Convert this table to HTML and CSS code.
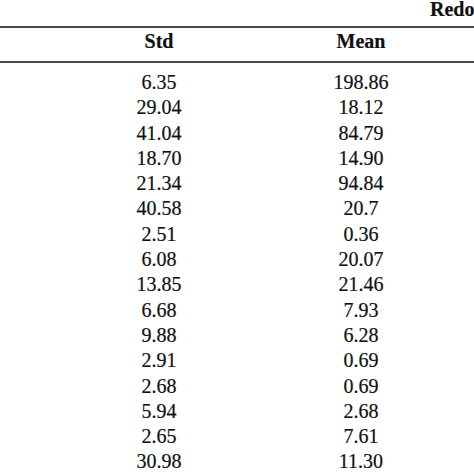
FILE: index.html
```html
<!DOCTYPE html>
<html>
<head>
<meta charset="utf-8">
<link rel="stylesheet" href="styles.css">
</head>
<body>
<div class="sheet">
  <div class="top"><span class="group">Redox Potential</span></div>
  <div class="head">
    <div></div><div class="cell">Std</div><div class="cell">Mean</div>
  </div>
  <div class="rows">
    <div class="row"><div></div><div class="cell">6.35</div><div class="cell">198.86</div></div>
    <div class="row"><div></div><div class="cell">29.04</div><div class="cell">18.12</div></div>
    <div class="row"><div></div><div class="cell">41.04</div><div class="cell">84.79</div></div>
    <div class="row"><div></div><div class="cell">18.70</div><div class="cell">14.90</div></div>
    <div class="row"><div></div><div class="cell">21.34</div><div class="cell">94.84</div></div>
    <div class="row"><div></div><div class="cell">40.58</div><div class="cell">20.7</div></div>
    <div class="row"><div></div><div class="cell">2.51</div><div class="cell">0.36</div></div>
    <div class="row"><div></div><div class="cell">6.08</div><div class="cell">20.07</div></div>
    <div class="row"><div></div><div class="cell">13.85</div><div class="cell">21.46</div></div>
    <div class="row"><div></div><div class="cell">6.68</div><div class="cell">7.93</div></div>
    <div class="row"><div></div><div class="cell">9.88</div><div class="cell">6.28</div></div>
    <div class="row"><div></div><div class="cell">2.91</div><div class="cell">0.69</div></div>
    <div class="row"><div></div><div class="cell">2.68</div><div class="cell">0.69</div></div>
    <div class="row"><div></div><div class="cell">5.94</div><div class="cell">2.68</div></div>
    <div class="row"><div></div><div class="cell">2.65</div><div class="cell">7.61</div></div>
    <div class="row"><div></div><div class="cell">30.98</div><div class="cell">11.30</div></div>
  </div>
</div>
</body>
</html>
```
FILE: styles.css
```css
html, body {
  margin: 0;
  padding: 0;
  background: #ffffff;
}
body {
  width: 474px;
  height: 474px;
  overflow: hidden;
  font-family: "Liberation Serif", "Times New Roman", serif;
  font-size: 20px;
  color: #111111;
  -webkit-text-stroke: 0.2px #111111;
}
.sheet {
  width: 474px;
}
.top {
  height: 26px;
  line-height: 18px;
  padding-left: 430px;
  white-space: nowrap;
  overflow: hidden;
  border-bottom: 2px solid #4a4a4a;
}
.group {
  font-weight: bold;
}
.head {
  display: grid;
  grid-template-columns: 58px 202px 202px;
  line-height: 26px;
  padding-bottom: 7px;
  font-weight: bold;
  border-bottom: 2px solid #4a4a4a;
}
.cell {
  text-align: center;
}
.rows {
  padding-top: 7px;
}
.row {
  display: grid;
  grid-template-columns: 58px 202px 202px;
  height: 25.3px;
  line-height: 25.3px;
}
```
